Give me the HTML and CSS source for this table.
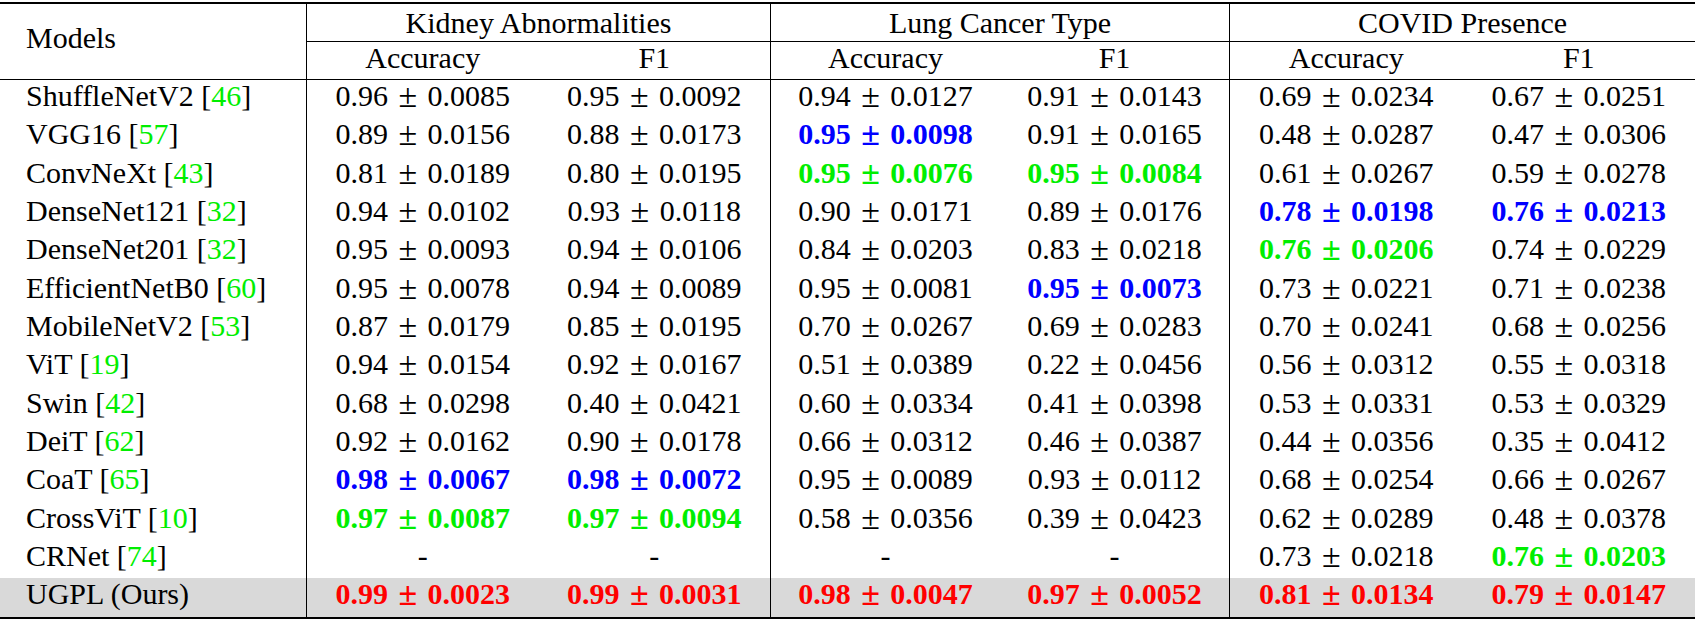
FILE: index.html
```html
<!DOCTYPE html>
<html lang="en">
<head>
<meta charset="utf-8">
<title>Results table</title>
<link rel="stylesheet" href="styles.css">
</head>
<body>
<table class="results">
  <colgroup>
    <col class="c-model">
    <col class="c-k1"><col class="c-k2">
    <col class="c-l1"><col class="c-l2">
    <col class="c-v1"><col class="c-v2">
  </colgroup>
  <thead>
    <tr class="hrow1">
      <th class="models" rowspan="2">Models</th>
      <th class="group sep" colspan="2">Kidney Abnormalities</th>
      <th class="group sep" colspan="2">Lung Cancer Type</th>
      <th class="group" colspan="2">COVID Presence</th>
    </tr>
    <tr class="hrow2">
      <th>Accuracy</th><th class="sep">F1</th>
      <th>Accuracy</th><th class="sep">F1</th>
      <th>Accuracy</th><th>F1</th>
    </tr>
  </thead>
  <tbody>
    <tr>
      <td class="name">ShuffleNetV2 [<span class="cite">46</span>]</td>
      <td>0.96<span class="pm">±</span>0.0085</td><td class="sep">0.95<span class="pm">±</span>0.0092</td>
      <td>0.94<span class="pm">±</span>0.0127</td><td class="sep">0.91<span class="pm">±</span>0.0143</td>
      <td>0.69<span class="pm">±</span>0.0234</td><td>0.67<span class="pm">±</span>0.0251</td>
    </tr>
    <tr>
      <td class="name">VGG16 [<span class="cite">57</span>]</td>
      <td>0.89<span class="pm">±</span>0.0156</td><td class="sep">0.88<span class="pm">±</span>0.0173</td>
      <td class="b blue">0.95<span class="pm">±</span>0.0098</td><td class="sep">0.91<span class="pm">±</span>0.0165</td>
      <td>0.48<span class="pm">±</span>0.0287</td><td>0.47<span class="pm">±</span>0.0306</td>
    </tr>
    <tr>
      <td class="name">ConvNeXt [<span class="cite">43</span>]</td>
      <td>0.81<span class="pm">±</span>0.0189</td><td class="sep">0.80<span class="pm">±</span>0.0195</td>
      <td class="b green">0.95<span class="pm">±</span>0.0076</td><td class="sep b green">0.95<span class="pm">±</span>0.0084</td>
      <td>0.61<span class="pm">±</span>0.0267</td><td>0.59<span class="pm">±</span>0.0278</td>
    </tr>
    <tr>
      <td class="name">DenseNet121 [<span class="cite">32</span>]</td>
      <td>0.94<span class="pm">±</span>0.0102</td><td class="sep">0.93<span class="pm">±</span>0.0118</td>
      <td>0.90<span class="pm">±</span>0.0171</td><td class="sep">0.89<span class="pm">±</span>0.0176</td>
      <td class="b blue">0.78<span class="pm">±</span>0.0198</td><td class="b blue">0.76<span class="pm">±</span>0.0213</td>
    </tr>
    <tr>
      <td class="name">DenseNet201 [<span class="cite">32</span>]</td>
      <td>0.95<span class="pm">±</span>0.0093</td><td class="sep">0.94<span class="pm">±</span>0.0106</td>
      <td>0.84<span class="pm">±</span>0.0203</td><td class="sep">0.83<span class="pm">±</span>0.0218</td>
      <td class="b green">0.76<span class="pm">±</span>0.0206</td><td>0.74<span class="pm">±</span>0.0229</td>
    </tr>
    <tr>
      <td class="name">EfficientNetB0 [<span class="cite">60</span>]</td>
      <td>0.95<span class="pm">±</span>0.0078</td><td class="sep">0.94<span class="pm">±</span>0.0089</td>
      <td>0.95<span class="pm">±</span>0.0081</td><td class="sep b blue">0.95<span class="pm">±</span>0.0073</td>
      <td>0.73<span class="pm">±</span>0.0221</td><td>0.71<span class="pm">±</span>0.0238</td>
    </tr>
    <tr>
      <td class="name">MobileNetV2 [<span class="cite">53</span>]</td>
      <td>0.87<span class="pm">±</span>0.0179</td><td class="sep">0.85<span class="pm">±</span>0.0195</td>
      <td>0.70<span class="pm">±</span>0.0267</td><td class="sep">0.69<span class="pm">±</span>0.0283</td>
      <td>0.70<span class="pm">±</span>0.0241</td><td>0.68<span class="pm">±</span>0.0256</td>
    </tr>
    <tr>
      <td class="name">ViT [<span class="cite">19</span>]</td>
      <td>0.94<span class="pm">±</span>0.0154</td><td class="sep">0.92<span class="pm">±</span>0.0167</td>
      <td>0.51<span class="pm">±</span>0.0389</td><td class="sep">0.22<span class="pm">±</span>0.0456</td>
      <td>0.56<span class="pm">±</span>0.0312</td><td>0.55<span class="pm">±</span>0.0318</td>
    </tr>
    <tr>
      <td class="name">Swin [<span class="cite">42</span>]</td>
      <td>0.68<span class="pm">±</span>0.0298</td><td class="sep">0.40<span class="pm">±</span>0.0421</td>
      <td>0.60<span class="pm">±</span>0.0334</td><td class="sep">0.41<span class="pm">±</span>0.0398</td>
      <td>0.53<span class="pm">±</span>0.0331</td><td>0.53<span class="pm">±</span>0.0329</td>
    </tr>
    <tr>
      <td class="name">DeiT [<span class="cite">62</span>]</td>
      <td>0.92<span class="pm">±</span>0.0162</td><td class="sep">0.90<span class="pm">±</span>0.0178</td>
      <td>0.66<span class="pm">±</span>0.0312</td><td class="sep">0.46<span class="pm">±</span>0.0387</td>
      <td>0.44<span class="pm">±</span>0.0356</td><td>0.35<span class="pm">±</span>0.0412</td>
    </tr>
    <tr>
      <td class="name">CoaT [<span class="cite">65</span>]</td>
      <td class="b blue">0.98<span class="pm">±</span>0.0067</td><td class="sep b blue">0.98<span class="pm">±</span>0.0072</td>
      <td>0.95<span class="pm">±</span>0.0089</td><td class="sep">0.93<span class="pm">±</span>0.0112</td>
      <td>0.68<span class="pm">±</span>0.0254</td><td>0.66<span class="pm">±</span>0.0267</td>
    </tr>
    <tr>
      <td class="name">CrossViT [<span class="cite">10</span>]</td>
      <td class="b green">0.97<span class="pm">±</span>0.0087</td><td class="sep b green">0.97<span class="pm">±</span>0.0094</td>
      <td>0.58<span class="pm">±</span>0.0356</td><td class="sep">0.39<span class="pm">±</span>0.0423</td>
      <td>0.62<span class="pm">±</span>0.0289</td><td>0.48<span class="pm">±</span>0.0378</td>
    </tr>
    <tr>
      <td class="name">CRNet [<span class="cite">74</span>]</td>
      <td>-</td><td class="sep">-</td>
      <td>-</td><td class="sep">-</td>
      <td>0.73<span class="pm">±</span>0.0218</td><td class="b green">0.76<span class="pm">±</span>0.0203</td>
    </tr>
    <tr class="ours">
      <td class="name">UGPL (Ours)</td>
      <td class="b red">0.99<span class="pm">±</span>0.0023</td><td class="sep b red">0.99<span class="pm">±</span>0.0031</td>
      <td class="b red">0.98<span class="pm">±</span>0.0047</td><td class="sep b red">0.97<span class="pm">±</span>0.0052</td>
      <td class="b red">0.81<span class="pm">±</span>0.0134</td><td class="b red">0.79<span class="pm">±</span>0.0147</td>
    </tr>
  </tbody>
</table>
</body>
</html>
```

FILE: styles.css
```css
html, body {
  margin: 0;
  padding: 0;
  background: #ffffff;
}

body {
  padding-top: 2px;
  font-family: "Liberation Serif", "Times New Roman", serif;
}

.results {
  table-layout: fixed;
  border-collapse: separate;
  border-spacing: 0;
  width: 1695px;
  border-top: 2px solid #000;
  border-bottom: 2px solid #000;
  font-family: "Liberation Serif", "Times New Roman", serif;
  font-size: 30px;
  color: #000;
}

.c-model { width: 307px; }
.c-k1 { width: 231.5px; }
.c-k2 { width: 232.5px; }
.c-l1 { width: 229px; }
.c-l2 { width: 230px; }
.c-v1 { width: 232.5px; }
.c-v2 { width: 232.5px; }

.results th,
.results td {
  padding: 0 0 6px 0;
  font-family: "Liberation Serif", "Times New Roman", serif;
  font-size: 30px;
  line-height: 32px;
  font-weight: normal;
  text-align: center;
  vertical-align: top;
  white-space: nowrap;
}

.results .sep {
  border-right: 1px solid #000;
}

.hrow1 { height: 38px; }
.results .hrow1 .group {
  line-height: 37px;
  padding: 0;
  border-bottom: 1px solid #000;
}

.hrow2 { height: 38px; }
.results .hrow2 th {
  padding-bottom: 5px;
  border-bottom: 1px solid #000;
}

.results .models {
  text-align: left;
  padding: 18px 0 0 26px;
  border-right: 1px solid #000;
  border-bottom: 1px solid #000;
}

.results tbody tr { height: 38.35px; }

.results .name {
  text-align: left;
  padding-left: 26px;
  border-right: 1px solid #000;
}

.results .cite { color: #00ee00; }

.results .pm {
  font-size: 34px;
  line-height: 0;
  margin: 0 10.5px;
  position: relative;
  top: 1px;
}

.results .b { font-weight: bold; }
.results .blue { color: #0000ff; }
.results .green { color: #00ee00; }
.results .red { color: #ff0000; }

.results .ours td { background: #d9d9d9; }
```
